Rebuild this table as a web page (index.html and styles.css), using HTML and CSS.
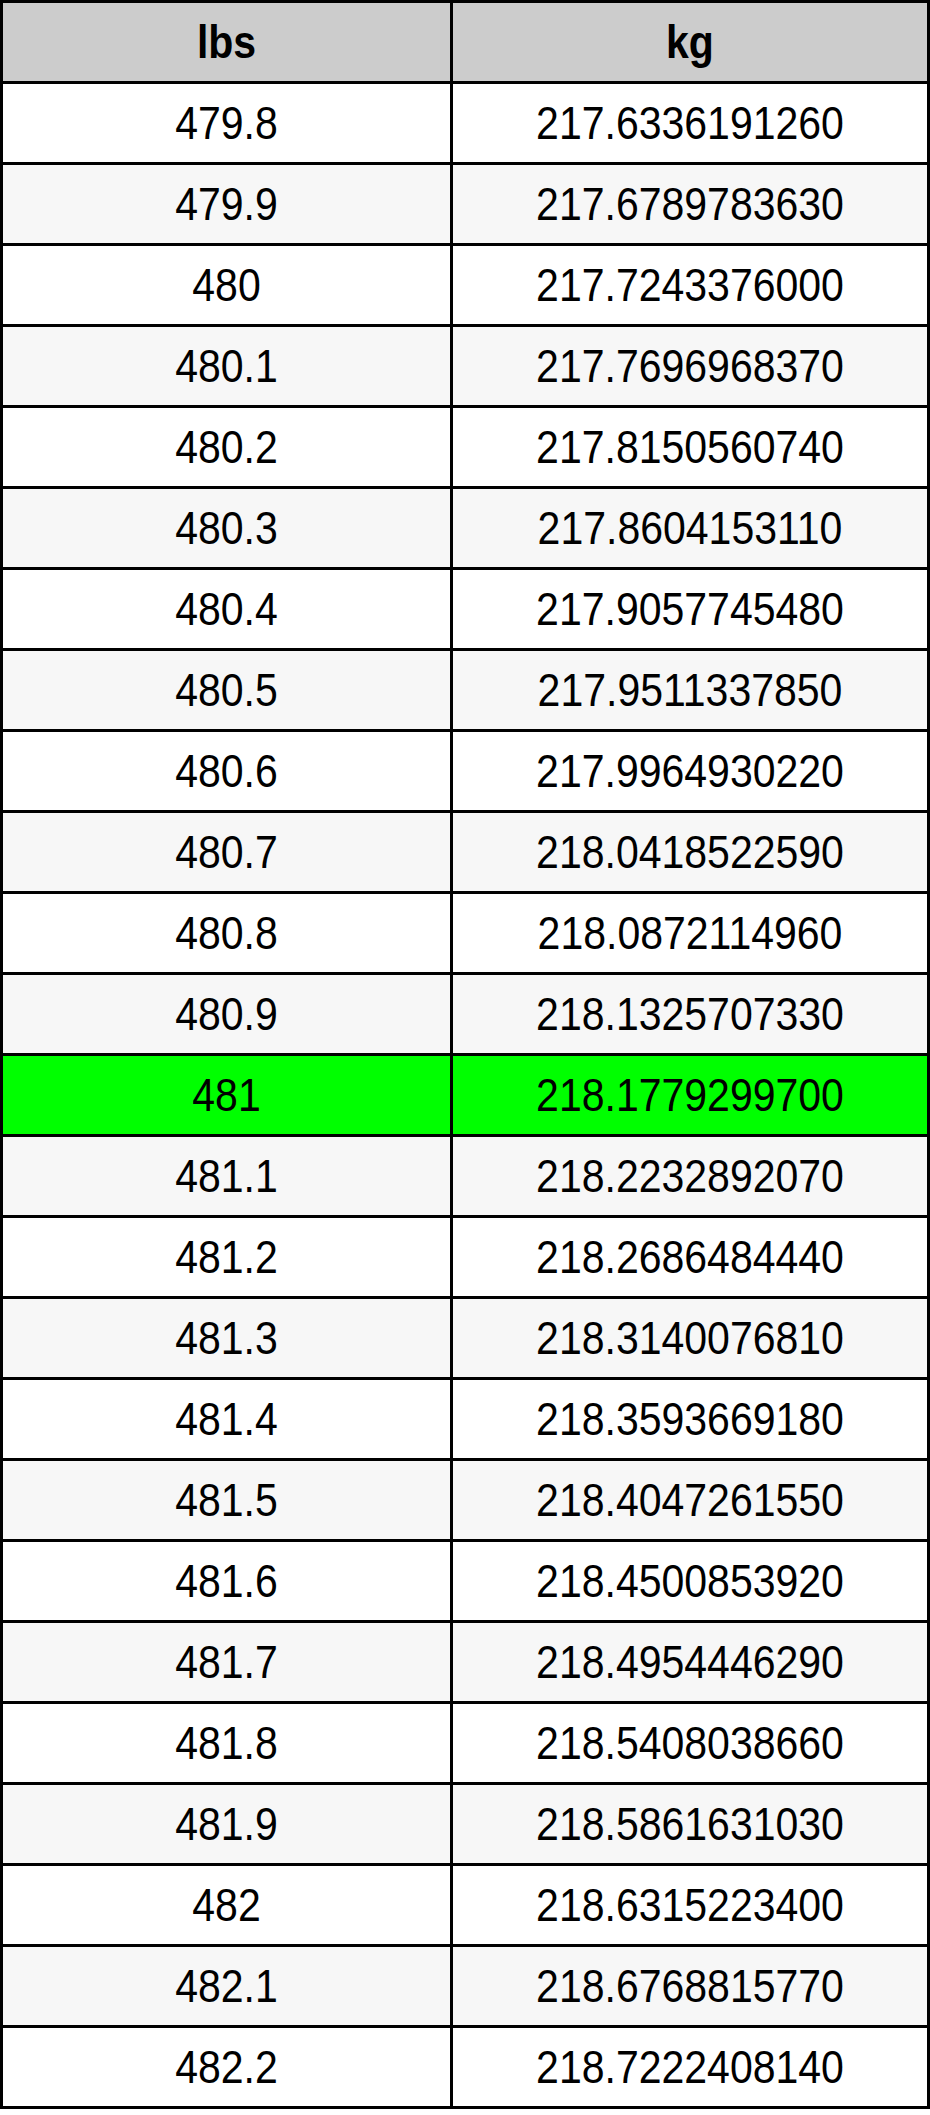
FILE: index.html
```html
<!DOCTYPE html>
<html>
<head>
<meta charset="utf-8">
<title>lbs to kg</title>
<link rel="stylesheet" href="styles.css">
</head>
<body>
<table class="conv">
<colgroup><col class="c1"><col class="c2"></colgroup>
<thead>
<tr><th><span class="t">lbs</span></th><th><span class="t">kg</span></th></tr>
</thead>
<tbody>
<tr><td><span class="t">479.8</span></td><td><span class="t">217.6336191260</span></td></tr>
<tr class="alt"><td><span class="t">479.9</span></td><td><span class="t">217.6789783630</span></td></tr>
<tr><td><span class="t">480</span></td><td><span class="t">217.7243376000</span></td></tr>
<tr class="alt"><td><span class="t">480.1</span></td><td><span class="t">217.7696968370</span></td></tr>
<tr><td><span class="t">480.2</span></td><td><span class="t">217.8150560740</span></td></tr>
<tr class="alt"><td><span class="t">480.3</span></td><td><span class="t">217.8604153110</span></td></tr>
<tr><td><span class="t">480.4</span></td><td><span class="t">217.9057745480</span></td></tr>
<tr class="alt"><td><span class="t">480.5</span></td><td><span class="t">217.9511337850</span></td></tr>
<tr><td><span class="t">480.6</span></td><td><span class="t">217.9964930220</span></td></tr>
<tr class="alt"><td><span class="t">480.7</span></td><td><span class="t">218.0418522590</span></td></tr>
<tr><td><span class="t">480.8</span></td><td><span class="t">218.0872114960</span></td></tr>
<tr class="alt"><td><span class="t">480.9</span></td><td><span class="t">218.1325707330</span></td></tr>
<tr class="hl"><td><span class="t">481</span></td><td><span class="t">218.1779299700</span></td></tr>
<tr class="alt"><td><span class="t">481.1</span></td><td><span class="t">218.2232892070</span></td></tr>
<tr><td><span class="t">481.2</span></td><td><span class="t">218.2686484440</span></td></tr>
<tr class="alt"><td><span class="t">481.3</span></td><td><span class="t">218.3140076810</span></td></tr>
<tr><td><span class="t">481.4</span></td><td><span class="t">218.3593669180</span></td></tr>
<tr class="alt"><td><span class="t">481.5</span></td><td><span class="t">218.4047261550</span></td></tr>
<tr><td><span class="t">481.6</span></td><td><span class="t">218.4500853920</span></td></tr>
<tr class="alt"><td><span class="t">481.7</span></td><td><span class="t">218.4954446290</span></td></tr>
<tr><td><span class="t">481.8</span></td><td><span class="t">218.5408038660</span></td></tr>
<tr class="alt"><td><span class="t">481.9</span></td><td><span class="t">218.5861631030</span></td></tr>
<tr><td><span class="t">482</span></td><td><span class="t">218.6315223400</span></td></tr>
<tr class="alt"><td><span class="t">482.1</span></td><td><span class="t">218.6768815770</span></td></tr>
<tr><td><span class="t">482.2</span></td><td><span class="t">218.7222408140</span></td></tr>
</tbody>
</table>
</body>
</html>
```

FILE: styles.css
```css
html, body {
  margin: 0;
  padding: 0;
  background: #ffffff;
}

.conv {
  border-collapse: separate;
  border-spacing: 0;
  width: 930px;
  table-layout: fixed;
  border-top: 3px solid #000;
  border-left: 3px solid #000;
  font-family: "Liberation Sans", Arial, sans-serif;
  color: #000;
}

.c1 { width: 450px; }
.c2 { width: 477px; }

.conv th,
.conv td {
  box-sizing: content-box;
  text-align: center;
  vertical-align: middle;
  border-right: 3px solid #000;
  border-bottom: 3px solid #000;
  font-size: 41px;
  line-height: 1;
  padding: 1px 0 0 0;
  height: 77px;
}

.t {
  display: inline-block;
  transform: scaleY(1.12);
}

.conv th {
  background: #cccccc;
  font-weight: bold;
}

.conv td {
  background: #ffffff;
  font-weight: normal;
}

.conv tr.alt td {
  background: #f7f7f7;
}

.conv tr.hl td {
  background: #00ff00;
}
```
